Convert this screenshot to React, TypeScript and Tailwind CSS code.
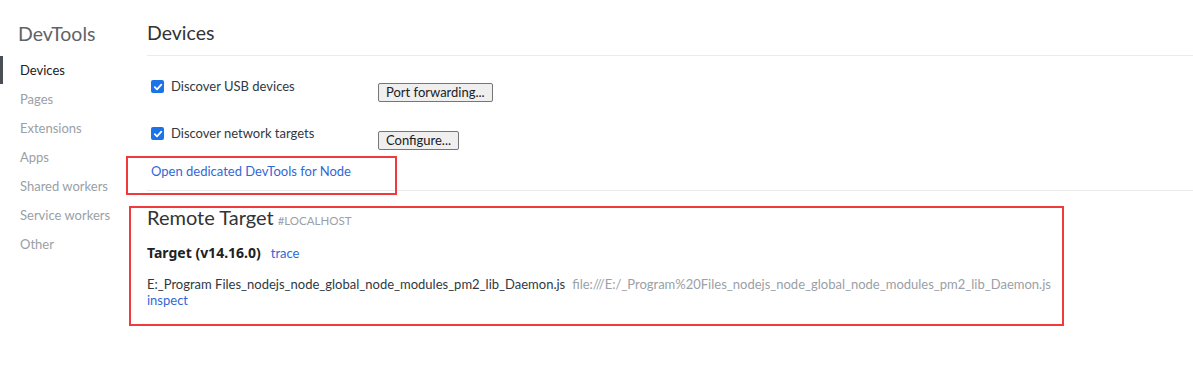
import React from "react";

const font = "font-['Lato','Noto_Sans',sans-serif]";

function Check() {
  return (
    <span className="inline-flex h-[13px] w-[13px] shrink-0 items-center justify-center rounded-[2px] bg-[#1a73e8]">
      <svg width="10" height="10" viewBox="0 0 10 10">
        <path d="M1.8 5.2 L4 7.3 L8.3 2.6" fill="none" stroke="white" strokeWidth="1.8" strokeLinecap="round" strokeLinejoin="round" />
      </svg>
    </span>
  );
}

function Btn({ children }: { children: React.ReactNode }) {
  return (
    <button className="h-[19px] rounded-[2px] border border-[#767676] bg-[#efefef] px-[7px] text-[13px] leading-[17px] text-[#202124]">
      {children}
    </button>
  );
}

const nav = ["Devices", "Pages", "Extensions", "Apps", "Shared workers", "Service workers", "Other"];

export default function App() {
  return (
    <div className={`relative flex h-[386px] w-[1193px] overflow-hidden bg-white text-[13px] text-[#303942] ${font}`}>
      <aside className="w-[147px] shrink-0">
        <div className="h-[56px] pl-[18px] pt-[21px] text-[19.5px] leading-[26px] text-[#5f6368]">DevTools</div>
        <ul>
          {nav.map((n, i) => (
            <li
              key={n}
              className={`relative flex h-[29px] items-center pl-[20px] ${i === 0 ? "text-[#202124]" : "text-[#9aa0a6]"}`}
            >
              {i === 0 && <span className="absolute left-0 top-0 h-[28px] w-[3px] bg-[#4a4f55]" />}
              {n}
            </li>
          ))}
        </ul>
      </aside>
      <main className="flex-1">
        <div className="h-[56px] border-b border-[#ebebeb] pt-[20px] text-[19.5px] leading-[26px] text-[#333]">Devices</div>
        <div className="pl-[4px]">
          <div className="flex h-[46px] items-start pt-[21px]">
            <label className="flex w-[227px] items-center gap-[7px]">
              <Check />
              <span>Discover USB devices</span>
            </label>
            <div className="mt-[6px]">
              <Btn>Port forwarding...</Btn>
            </div>
          </div>
          <div className="flex h-[48px] items-start pt-[22px]">
            <label className="flex w-[227px] items-center gap-[7px]">
              <Check />
              <span>Discover network targets</span>
            </label>
            <div className="mt-[7px]">
              <Btn>Configure...</Btn>
            </div>
          </div>
          <div className="h-[40px] pt-[12px] leading-[18px]">
            <a className="text-[#3367d6]">Open dedicated DevTools for Node</a>
          </div>
        </div>
        <div className="border-t border-[#ebebeb] pt-[13px]">
          <div className="flex items-baseline gap-[4px]">
            <span className="text-[20px] leading-[26px] text-[#333]">Remote Target</span>
            <span className="text-[11.5px] text-[#9aa0a6]">#LOCALHOST</span>
          </div>
          <div className="mt-[14px] flex items-baseline gap-[10px]">
            <span className="font-['Noto_Sans',sans-serif] text-[14px] font-bold leading-[18px] text-[#202124]">Target (v14.16.0)</span>
            <a className="text-[#3367d6]">trace</a>
          </div>
          <div className="mt-[12px] flex items-baseline gap-[7px] leading-[16px]">
            <span className="text-[#303942]">E:_Program Files_nodejs_node_global_node_modules_pm2_lib_Daemon.js</span>
            <span className="text-[#9aa0a6]">file:///E:/_Program%20Files_nodejs_node_global_node_modules_pm2_lib_Daemon.js</span>
          </div>
          <div className="leading-[17px]">
            <a className="text-[#3367d6]">inspect</a>
          </div>
        </div>
      </main>
      <div className="pointer-events-none absolute left-[126px] top-[156px] h-[39px] w-[271px] border-2 border-[#ef3b3b]" />
      <div className="pointer-events-none absolute left-[129px] top-[206px] h-[120px] w-[935px] border-2 border-[#ef3b3b]" />
    </div>
  );
}
